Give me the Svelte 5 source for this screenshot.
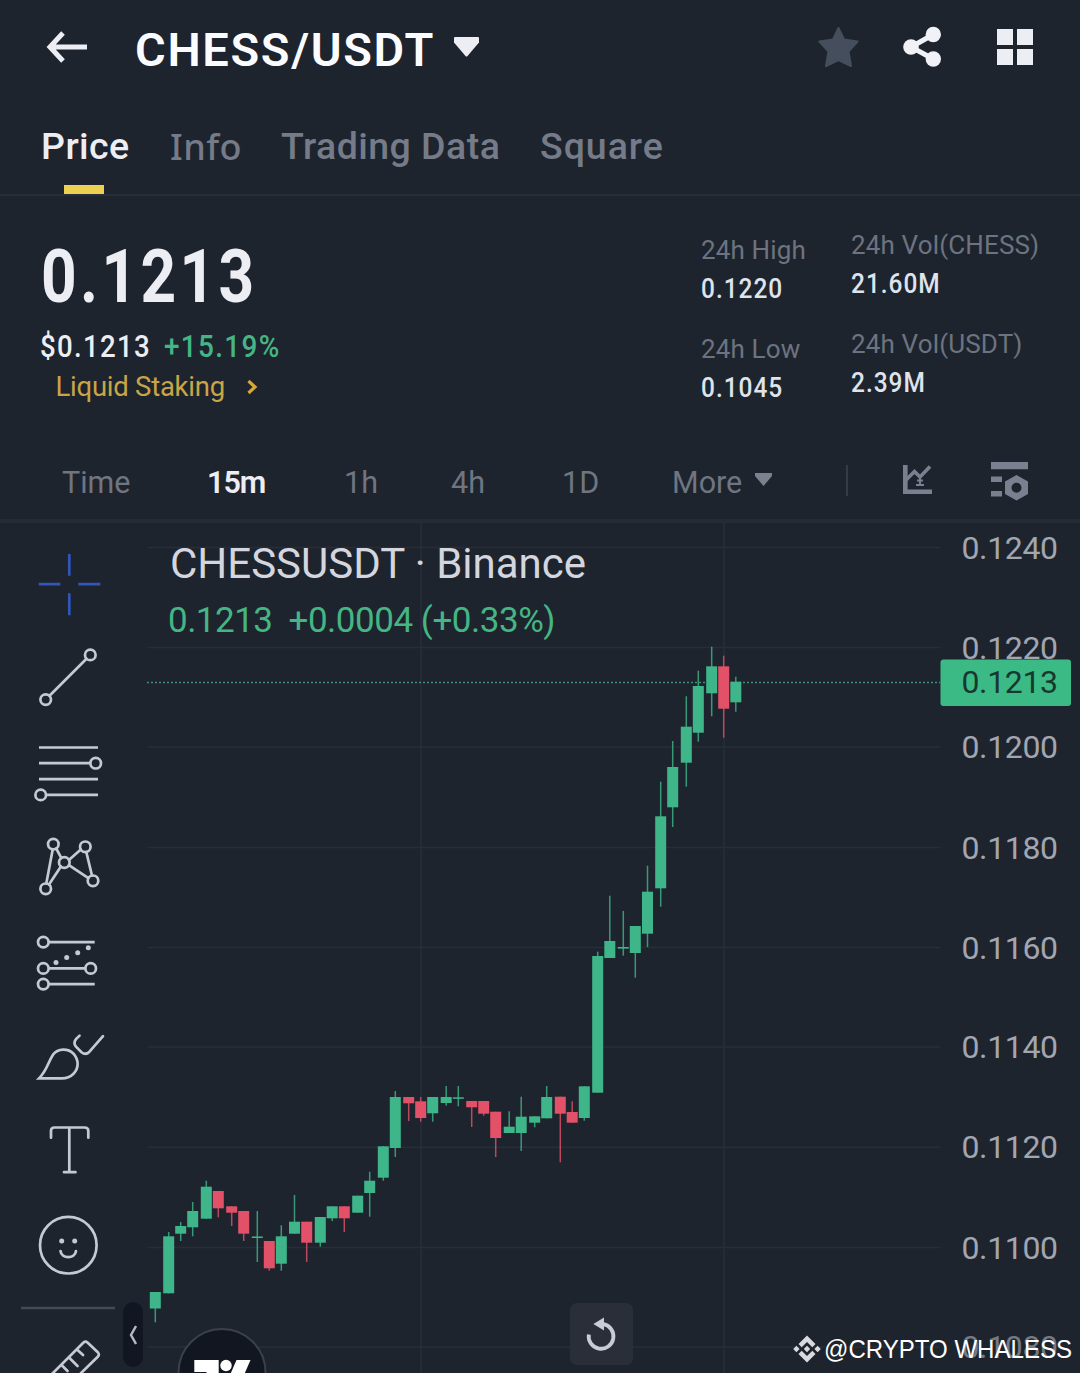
<script>
  const tabs = ['Price', 'Info', 'Trading Data', 'Square'];
  const periods = ['Time', '15m', '1h', '4h', '1D'];
  const stats = [
    [
      { label: '24h High', value: '0.1220' },
      { label: '24h Low', value: '0.1045' },
    ],
    [
      { label: '24h Vol(CHESS)', value: '21.60M' },
      { label: '24h Vol(USDT)', value: '2.39M' },
    ],
  ];

  const levels = [
    ['0.1240', 547.5], ['0.1220', 647.5], ['0.1200', 747], ['0.1180', 847.5], ['0.1160', 947.5],
    ['0.1140', 1047], ['0.1120', 1147.3], ['0.1100', 1247.5], ['0.1080', 1347],
  ];

  // x centre, wick top, body top, body bottom, wick bottom, falling
  const candles = [
    [155.3, 1292, 1292, 1308.5, 1322.3], [168.7, 1232, 1236.3, 1293.3, 1293.3], [180.7, 1222, 1226, 1233.7, 1241],
    [192.7, 1202, 1211, 1227.3, 1236.3], [206.3, 1180.7, 1186.7, 1218.7, 1218.7], [218.3, 1191, 1191, 1208.3, 1217.3, 1],
    [231.7, 1206.3, 1206.3, 1212.7, 1226, 1], [243.7, 1211, 1211, 1233.7, 1241, 1], [257.3, 1211, 1236.5, 1238, 1262],
    [269.3, 1241, 1241, 1268.3, 1270.7, 1], [281.3, 1225.3, 1236.3, 1263.7, 1270.7], [294.5, 1195, 1221.7, 1233.7, 1233.7],
    [306.7, 1221.7, 1221.7, 1242.7, 1262, 1], [320.3, 1217, 1217, 1242.7, 1246.7], [332.2, 1206.3, 1206.3, 1218.3, 1221],
    [344.3, 1206.3, 1206.3, 1218.3, 1232, 1], [357.7, 1195.7, 1195.7, 1212.7, 1212.7], [369.7, 1171.7, 1180.7, 1193, 1216.7],
    [383.3, 1146.3, 1146.3, 1177.7, 1180.7], [395.3, 1091, 1097, 1148, 1157], [408.7, 1097, 1097, 1103.3, 1121, 1],
    [420.7, 1097, 1101.3, 1118, 1121.7, 1], [432.7, 1097, 1097, 1113.3, 1121.7], [446.2, 1086, 1097, 1103, 1105.7],
    [458.3, 1086, 1097.3, 1098.8, 1106.3], [471.7, 1101, 1101, 1107.3, 1127, 1], [483.7, 1101, 1101, 1113.7, 1115.7, 1],
    [495.7, 1111.7, 1111.7, 1138, 1157, 1], [509.2, 1111.3, 1126.7, 1133, 1133], [521.2, 1096.7, 1116.7, 1133, 1151],
    [534.7, 1116.3, 1116.3, 1122.7, 1127.3], [546.7, 1086, 1097, 1118.3, 1118.3], [560.3, 1096.7, 1096.7, 1113.7, 1162.3, 1],
    [572.2, 1101.3, 1112, 1122.7, 1122.7, 1], [584.3, 1086.3, 1086.3, 1118, 1120.7], [597.7, 951.7, 956, 1092.7, 1092.7],
    [609.8, 895.7, 941, 958, 958], [623.3, 911, 947, 948.6, 955.7], [635.3, 926, 926, 953, 977.7],
    [647.5, 865.7, 891.7, 933.7, 947], [660.7, 781.7, 816.3, 888.3, 906.7], [672.7, 741, 767, 807.3, 827],
    [686.3, 696.3, 726.7, 762.7, 786.7], [698.3, 670.7, 686, 732.7, 741.7], [711.7, 646.7, 666.3, 693.3, 716.3],
    [723.7, 655.7, 666.3, 708.7, 737.7, 1], [735.8, 676.7, 681.7, 702.3, 711.7],
  ];

  // Each drawing tool: stroked path, ring centres, solid dots
  const tools = [
    { name: 'cross', d: 'M38.7 0H60.3M78.3 0H100.3M69.3 -30.2V-8.5M69.3 9V31', rings: [], dots: [] },
    { name: 'trend', d: 'M49.5 17.6L86.5 -19.5', rings: [[90.3, -23.3], [45.7, 21.4]], dots: [] },
    { name: 'fib', d: 'M39 -25.7H98M39 -10H90.4M39 6H98M46 21.7H98', rings: [[95.7, -10], [40.7, 21.7]], dots: [] },
    {
      name: 'pattern',
      d: 'M52.7 -17.8L46.3 16.3M56.2 -18.7L61.4 -9.1M60.9 -.7L49 17.4M68.9 -7.3L80.8 -17.7M68.9 -2L88.4 10.9M86.3 -15.2L92 8.4',
      rings: [[53.3, -23.1], [85.3, -20.4], [64.3, -4.7], [45.7, 21.6], [93, 13.6]], dots: [],
    },
    {
      name: 'forecast', d: 'M48.7 -20.1H94.7M48.7 6.2H85.3M48.7 21.9H94.7',
      rings: [[43.3, -20.1], [43.3, 6.2], [90.7, 6.2], [43.3, 21.9]],
      dots: [[56, 0.2], [66.7, -4.8], [77.7, -9.5], [88.3, -14.5]],
    },
    {
      name: 'brush',
      d: 'M39 22.2C47 14 48 6 53 -1.500C58 -8 68 -8 73.500 -2.500C79 4 79 12 73.500 17.500C70 21 66.500 22.200 62 22.200ZM79.500 -20.500C75 -17 72.800 -13.500 76 -9.500L81.500 -4C84 -2 87 -2 89.500 -4.500L103 -20',
      rings: [], dots: [],
    },
    { name: 'text', d: 'M51 -12.500V-19.500Q51 -22.700 54.500 -22.700H84.500Q88.300 -22.700 88.300 -19.500V-12.500M69.300 -22.700V22M64 22H75.500', rings: [], dots: [] },
    {
      name: 'emoji', d: 'M96.600 0A28.300 28.300 0 1 1 40 0A28.300 28.300 0 1 1 96.600 0ZM60.500 5.800C61.500 14 75 14 76 5.800',
      rings: [], dots: [[61.7, -4.3], [74.7, -4.3]],
    },
  ];
</script>

<main>
  <header>
    <svg class="back" viewBox="0 0 42 34"><path d="M17 3L4 17L17 31M4 17H41" /></svg>
    <h1>CHESS/USDT</h1>
    <svg class="caret" viewBox="0 0 25 20"><path d="M1 0H24Q25 0 25 1V5.500L13.500 19Q12.500 20 11.500 19L0 5.500V1Q0 0 1 0Z" /></svg>
    <svg class="star" viewBox="0 0 41 42"><path d="M20.500 2L26 13.500L39.500 15.500L30.500 25.500L33 40L20.500 34L8 40L10.500 25.500L1.500 15.500L15 13.500Z" /></svg>
    <svg class="share" viewBox="0 0 40 42">
      <path d="M30.300 8.500L8 21L30.300 33" /><circle cx="8" cy="21" r="7.800" /><circle cx="30.300" cy="8.500" r="7.700" /><circle cx="30.300" cy="33" r="7.700" />
    </svg>
    <div class="apps"><i></i><i></i><i></i><i></i></div>
  </header>

  <nav>
    {#each tabs as tab, i}
      <span class="tab" class:slab={tab === 'Info'} class:active={i === 0}>{tab}</span>
    {/each}
  </nav>

  <section class="quote">
    <div class="last">
      <div class="price"><span>0.1213</span></div>
      <div class="fiat"><span class="usd">$0.1213</span><span class="up">+15.19%</span></div>
      <div class="category">
        <span>Liquid Staking</span>
        <svg viewBox="0 0 12 16"><path d="M2.500 2L9 8L2.500 14" /></svg>
      </div>
    </div>
    {#each stats as column}
      <dl>
        {#each column as stat}
          <div><dt>{stat.label}</dt><dd>{stat.value}</dd></div>
        {/each}
      </dl>
    {/each}
  </section>

  <section class="periods">
    {#each periods as period}
      <span class:active={period === '15m'}>{period}</span>
    {/each}
    <span class="more">More <svg viewBox="0 0 17 13"><path d="M0 0H17V3L8.500 13L0 3Z" /></svg></span>
    <i class="rule"></i>
    <svg class="indicator" viewBox="0 0 29 30">
      <path class="axis" d="M2.300 0V26.700H29" />
      <path class="line" d="M3 15L11.500 6.500L17 12L27 1.500" />
      <path class="fx" d="M17 11V20M14 15.500H20M13 20H21" />
    </svg>
    <svg class="settings" viewBox="0 0 37 39">
      <path fill-rule="evenodd" d="M0 0H37V7.300H0ZM0 14.500H11V20H0ZM0 29H11V34.500H0ZM25.500 13L37 19.500V32L25.500 38.500L14 32V19.500ZM25.500 20.800A5 5 0 1 0 25.500 30.800A5 5 0 1 0 25.500 20.800Z" />
    </svg>
  </section>

  <section class="chart">
    <aside>
      {#each tools as tool}
        <svg class="tool {tool.name}" viewBox="0 -47.2 146 94.4">
          <path d={tool.d} />
          {#each tool.rings as [cx, cy]}<circle {cx} {cy} r="5.300" />{/each}
          {#each tool.dots as [cx, cy]}<circle class="dot" {cx} {cy} r="2.500" />{/each}
        </svg>
      {/each}
      <svg class="tool ruler" viewBox="0 1292 146 81">
        <path class="divider" d="M21 1308H115" />
        <path d="M48 1378L83.500 1342.500Q85.500 1340.800 87.500 1342.500L98 1352.500Q99.700 1354.500 98 1356.500L74 1380M77 1349.500L83 1355M69 1357.500L77.500 1366M61.500 1365L67.500 1371" />
      </svg>
      <div class="collapse"><svg viewBox="0 0 8 20"><path d="M7 1L2 10L7 19" /></svg></div>
    </aside>

    <svg class="plot" viewBox="146 523 934 850">
      <g class="grid">
        {#each levels as [, y]}<path d="M148 {y}H940" />{/each}
        <path d="M421 523V1373M724 523V1373" />
      </g>
      <path class="current" d="M147 682.500H940" />
      {#each candles as [x, high, top, bottom, low, falling]}
        <g class:falling={falling} class="candle">
          <rect x={x - 0.75} y={high} width="1.500" height={low - high} opacity=".8" />
          <rect x={x - 5.5} y={top} width="11" height={bottom - top} />
        </g>
      {/each}

      <text class="symbol" x="170" y="578" textLength="416">CHESSUSDT · Binance</text>
      <text class="change" x="168" y="632" textLength="105">0.1213</text>
      <text class="change" x="288.500" y="632" textLength="267">+0.0004 (+0.33%)</text>

      {#each levels as [label, y]}
        <text class="level" class:faded={label === '0.1080'} x="961.500" y={y + 11} textLength="96.500">{label}</text>
      {/each}
      <rect class="badge" x="940.500" y="659.500" width="130.500" height="46.500" rx="3" />
      <text class="level now" x="961.500" y="693" textLength="96.500">0.1213</text>

      <circle class="logo" cx="222" cy="1372.500" r="43.500" />
      <path class="mark" d="M194.300 1360H218.700V1380H206.500V1372H194.300ZM236.500 1360H250.500L244 1375H230Z" />
      <circle class="mark" cx="226" cy="1365.500" r="5.700" />

      <rect class="reset" x="570" y="1303" width="63" height="62" rx="7" />
      <path class="arc" d="M588.800 1334.500A12.400 12.400 0 1 0 603.500 1324.200" />
      <path class="head" d="M593.400 1324L604 1317.500V1330.500Z" />

      <g class="watermark">
        <path d="M807 1335.500L815.500 1344L812.300 1347.200L807 1341.900L801.700 1347.200L798.500 1344ZM807 1362.500L798.500 1354L801.700 1350.800L807 1356.100L812.300 1350.800L815.500 1354ZM796.400 1345.800L799.600 1349L796.400 1352.200L793.200 1349ZM817.600 1345.800L820.800 1349L817.600 1352.200L814.400 1349ZM807 1345.800L810.200 1349L807 1352.200L803.800 1349Z" />
        <text x="824" y="1358" textLength="248" lengthAdjust="spacingAndGlyphs">@CRYPTO WHALESS</text>
      </g>
    </svg>
  </section>
</main>

<style>
  :global(body) { margin: 0; background: #1e242e; }
  main {
    width: 1080px; height: 1373px; overflow: hidden;
    background: #1e242e; color: #eceef4;
    font-family: Roboto, "Liberation Sans", sans-serif;
  }
  svg { display: block; }
  svg, i { flex: none; }

  header { display: flex; align-items: center; height: 93px; padding: 0 47px 0 46px; }
  .back { width: 42px; height: 34px; fill: none; stroke: #eceef4; stroke-width: 5; }
  h1 { margin: 5px 0 0 47px; width: 302px; font-size: 47px; font-weight: 650; letter-spacing: 1.650px; line-height: 93px; color: #fbfcff; white-space: nowrap; }
  .caret { width: 25px; height: 20px; margin-left: 17px; fill: #eceef4; }
  .star { width: 41px; height: 42px; margin-left: auto; fill: #454e5d; stroke: #454e5d; stroke-width: 2; stroke-linejoin: round; }
  .share { width: 40px; height: 42px; margin-left: 44px; fill: #f0f2f7; }
  .share path { fill: none; stroke: #f0f2f7; stroke-width: 5; }
  .apps { display: grid; grid-template-columns: 16px 16px; gap: 4px; margin-left: 54px; }
  .apps i { height: 16px; background: #eceef4; }

  nav { display: grid; grid-template-columns: 129px 111px 259px auto; height: 101px; padding-left: 41px; border-bottom: 2px solid #282e39; }
  .tab { position: relative; padding-top: 6px; font-size: 37.500px; font-weight: 500; letter-spacing: .450px; line-height: 95px; color: #757b88; white-space: nowrap; }
  .tab:last-child { letter-spacing: .950px; }
  .slab { font-family: "Noto Sans", Roboto, sans-serif; font-size: 36px; }
  .active { color: #eceef4; }
  .tab.active::after { content: ""; position: absolute; left: 23px; bottom: 0; width: 40px; height: 9px; background: #ecd051; }

  .quote { display: grid; grid-template-columns: 660px 150px auto; height: 249px; padding-left: 41px; white-space: nowrap; }
  .last { padding-top: 44px; }
  .price { height: 74px; font-size: 74px; font-weight: 700; line-height: 74px; letter-spacing: 4px; }
  .price span { display: inline-block; transform: scaleX(.84); transform-origin: left; }
  .fiat { display: grid; grid-template-columns: 124px auto; margin: 13px 0 0 -1px; font-size: 31px; font-weight: 500; line-height: 40px; letter-spacing: 1.500px; }
  .fiat span { justify-self: start; transform: scaleX(.89); transform-origin: left; }
  .fiat .up { color: #45b584; transform: scaleX(.9); }
  .category { display: flex; align-items: center; padding-left: 14.500px; font-size: 27.500px; letter-spacing: -.250px; line-height: 40px; color: #c9a546; }
  .category span { width: 190px; }
  .category svg { width: 12px; height: 16px; fill: none; stroke: #d6a937; stroke-width: 3.200; }
  dl { display: flex; flex-direction: column; gap: 22px; margin: 0; padding-top: 34.500px; }
  dl:last-child { padding-top: 29.500px; }
  dt { font-size: 26px; line-height: 39px; letter-spacing: .150px; color: #6d737f; }
  dd { width: max-content; margin: 0; font-size: 27.500px; font-weight: 500; line-height: 38px; letter-spacing: 1.100px; color: #dfe3ec; transform: scaleX(.89); transform-origin: left; }

  .periods {
    display: grid; grid-template-columns: 145px 137px 107px 111px 110px 174px 57px 88px auto; align-items: center;
    height: 74px; padding-left: 62px; border-bottom: 4px solid #252b36;
    font-size: 30.500px; color: #6f7581; white-space: nowrap;
  }
  .periods .active { font-weight: 600; color: #eceef4; letter-spacing: -1px; }
  .more { display: flex; align-items: center; gap: 13px; }
  .more svg { width: 17px; height: 13px; margin-top: -6px; fill: #7b818e; }
  .rule { width: 2px; height: 31px; margin-top: -4px; background: #343a46; }
  .indicator { width: 29px; height: 30px; margin-top: -4px; fill: none; stroke: #7a8090; }
  .axis { stroke-width: 4.600; }
  .line { stroke-width: 3.600; }
  .fx { stroke-width: 2; }
  .settings { width: 37px; height: 39px; margin-top: -2px; fill: #7a8090; }

  .chart { display: grid; grid-template-columns: 146px 934px; height: 850px; }
  aside { position: relative; display: flex; flex-direction: column; height: 836px; padding-top: 14px; }
  .tool { width: 146px; height: 94.400px; fill: none; stroke: #c5c9d2; stroke-width: 2.700; stroke-linecap: round; }
  .tool .dot { fill: #c5c9d2; stroke: none; }
  .cross { stroke: #2f56b8; stroke-linecap: butt; }
  .fib, .forecast { stroke-linecap: butt; }
  .ruler { height: 81px; }
  .ruler .divider { stroke: #454a55; stroke-linecap: butt; }
  .collapse { position: absolute; left: 123px; top: 779px; display: grid; place-items: center; width: 20px; height: 65px; border-radius: 10px; background: #121622; }
  .collapse svg { width: 8px; height: 20px; fill: none; stroke: #b5b9c2; stroke-width: 2.400; }

  .plot { width: 934px; height: 850px; }
  .grid { fill: none; stroke: #282e39; stroke-width: 1.500; }
  .current { stroke: #3f8f75; stroke-width: 1.500; stroke-dasharray: 2 2; }
  .candle { fill: #3eb689; }
  .falling { fill: #e25167; }
  .symbol { font-size: 42px; fill: #d3d6de; }
  .change { font-size: 35px; fill: #45b584; }
  .level { font-size: 32px; fill: #a2a6b0; }
  .faded { fill: #737985; }
  .badge { fill: #3cba86; }
  .now { fill: #17382f; }
  .logo { fill: #121620; stroke: #3b404a; stroke-width: 2; }
  .mark { fill: #fff; }
  .reset { fill: #2a2e39; }
  .arc { fill: none; stroke: #c8ccd6; stroke-width: 3.800; }
  .head { fill: #c8ccd6; }
  .watermark path { fill: #d9dade; }
  .watermark text { font-family: "Liberation Sans", Arial, sans-serif; font-size: 25px; fill: #fff; }
</style>
